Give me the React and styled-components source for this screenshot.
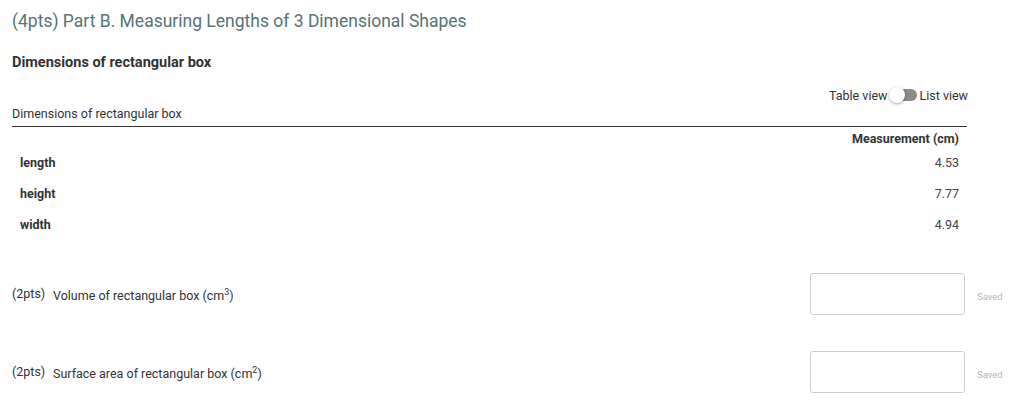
import styled, { createGlobalStyle } from "styled-components";

const Global = createGlobalStyle`
  body {
    margin: 0;
    background: #ffffff;
    font-family: Roboto, "Liberation Sans", sans-serif;
    color: #333333;
  }
`;

const rows = [
  { name: "length", value: "4.53" },
  { name: "height", value: "7.77" },
  { name: "width", value: "4.94" },
];

const questions = [
  { pts: "(2pts)", label: "Volume of rectangular box (cm", sup: "3" },
  { pts: "(2pts)", label: "Surface area of rectangular box (cm", sup: "2" },
];

export default function App() {
  return (
    <Page>
      <Global />
      <Title>(4pts) Part B. Measuring Lengths of 3 Dimensional Shapes</Title>
      <Heading>Dimensions of rectangular box</Heading>

      <ViewBar>
        <ViewLabel>Table view</ViewLabel>
        <Toggle>
          <Knob />
        </Toggle>
        <ViewLabel>List view</ViewLabel>
      </ViewBar>

      <Table>
        <Caption>Dimensions of rectangular box</Caption>
        <HeadRow>
          <HeadCell>Measurement (cm)</HeadCell>
        </HeadRow>
        {rows.map((r) => (
          <Row key={r.name}>
            <RowName>{r.name}</RowName>
            <RowValue>{r.value}</RowValue>
          </Row>
        ))}
      </Table>

      <Questions>
        {questions.map((q, i) => (
          <Question key={i}>
            <Pts>{q.pts}</Pts>
            <QLabel>
              {q.label}
              <sup>{q.sup}</sup>)
            </QLabel>
            <Answer />
            <Saved>Saved</Saved>
          </Question>
        ))}
      </Questions>
    </Page>
  );
}

const Page = styled.div`
  width: 1024px;
  height: 401px;
  overflow: hidden;
  padding: 10px 0 0 12px;
  box-sizing: border-box;
`;

const Title = styled.h1`
  margin: 0;
  font-size: 17.5px;
  font-weight: 400;
  color: #557474;
  line-height: 22px;
`;

const Heading = styled.h2`
  margin: 22px 0 0;
  font-size: 14.5px;
  font-weight: 700;
  color: #333333;
  line-height: 18px;
`;

const ViewBar = styled.div`
  display: flex;
  align-items: center;
  justify-content: flex-end;
  width: 956px;
  margin-top: 13px;
  height: 20px;
`;

const ViewLabel = styled.span`
  font-size: 12.5px;
  color: #333333;
`;

const Toggle = styled.div`
  position: relative;
  width: 24px;
  height: 12px;
  background: #8a8a8a;
  border-radius: 6px;
  margin: 0 2px 0 6px;
`;

const Knob = styled.div`
  position: absolute;
  left: -4px;
  top: -2px;
  width: 16px;
  height: 16px;
  border-radius: 50%;
  background: #ffffff;
  box-shadow: 0 1px 3px rgba(0, 0, 0, 0.35);
`;

const Table = styled.div`
  width: 955px;
  margin-top: 1px;
`;

const Caption = styled.div`
  font-size: 12.5px;
  color: #333333;
  line-height: 16px;
  padding-bottom: 4px;
  border-bottom: 1px solid #333333;
`;

const HeadRow = styled.div`
  display: flex;
  justify-content: flex-end;
  padding: 3px 8px 0 0;
  height: 18px;
`;

const HeadCell = styled.span`
  font-size: 12.5px;
  font-weight: 700;
  color: #333333;
  position: relative;
  top: 1px;
`;

const Row = styled.div`
  display: flex;
  justify-content: space-between;
  align-items: center;
  height: 31px;
  padding: 0 8px;
  font-size: 12.5px;
  position: relative;
  top: -1px;
`;

const RowName = styled.span`
  font-weight: 700;
  color: #333333;
`;

const RowValue = styled.span`
  color: #444444;
`;

const Questions = styled.div`
  margin-top: 32px;
  display: flex;
  flex-direction: column;
  gap: 37px;
`;

const Question = styled.div`
  display: flex;
  align-items: center;
  height: 41px;
`;

const Pts = styled.span`
  font-size: 12.5px;
  color: #333333;
  width: 41px;
  position: relative;
  top: 0px;
`;

const QLabel = styled.span`
  font-size: 12.5px;
  color: #333333;
  flex: 1;
  position: relative;
  top: 2px;

  sup {
    font-size: 9px;
  }
`;

const Answer = styled.div`
  width: 153px;
  height: 40px;
  border: 1px solid #cfcfcf;
  border-radius: 3px;
`;

const Saved = styled.span`
  font-size: 9.5px;
  color: #b5b5b5;
  margin-left: 12px;
  width: 47px;
  position: relative;
  top: 3px;
`;
